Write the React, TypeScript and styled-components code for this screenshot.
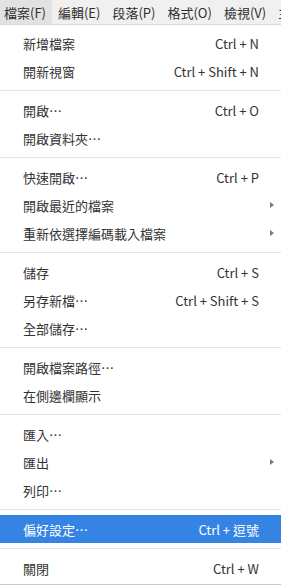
import React from "react";
import styled, { createGlobalStyle } from "styled-components";

const Global = createGlobalStyle`
  html, body { margin: 0; padding: 0; background: #ffffff; overflow: hidden; }
  body { font-family: "Noto Sans CJK TC", "Noto Sans", sans-serif; -webkit-font-smoothing: antialiased; }
`;

const Page = styled.div`
  width: 281px;
  height: 585px;
  overflow: hidden;
  display: flex;
  flex-direction: column;
  background: #ffffff;
`;

const MenuBar = styled.div`
  display: flex;
  height: 24px;
  background: #f0f0f0;
  border-bottom: 1px solid #d9d9d9;
  margin-left: -2px;
  white-space: nowrap;
  flex-shrink: 0;
`;

const BarItem = styled.div<{ $active?: boolean }>`
  display: flex;
  align-items: center;
  padding: 0 6px;
  font-size: 13px;
  color: #2e2e2e;
  background: ${(p) => (p.$active ? "#e2e2e2" : "transparent")};
`;

const Dropdown = styled.div`
  display: flex;
  flex-direction: column;
  padding: 4px 0 2px;
  border-bottom: 1px solid #c9c9c9;
  background: #ffffff;
  flex-shrink: 0;
`;

const Row = styled.div<{ $hl?: boolean }>`
  display: flex;
  align-items: center;
  height: 28px;
  padding: 0 22px 0 23px;
  font-size: 13px;
  color: ${(p) => (p.$hl ? "#ffffff" : "#333333")};
  background: ${(p) => (p.$hl ? "#3584e4" : "transparent")};
  position: relative;
`;

const Label = styled.span`
  flex: 1;
  white-space: nowrap;
`;

const Shortcut = styled.span`
  white-space: nowrap;
`;

const Arrow = styled.span`
  position: absolute;
  right: 7px;
  top: 11px;
  width: 0;
  height: 0;
  border-top: 3px solid transparent;
  border-bottom: 3px solid transparent;
  border-left: 4px solid #7a7a7a;
`;

const Sep = styled.div`
  height: 1px;
  margin: 5px 0;
  background: #e3e3e3;
`;

type Item = { label: string; shortcut?: string; sub?: boolean; hl?: boolean } | "sep";

const items: Item[] = [
  { label: "新增檔案", shortcut: "Ctrl + N" },
  { label: "開新視窗", shortcut: "Ctrl + Shift + N" },
  "sep",
  { label: "開啟…", shortcut: "Ctrl + O" },
  { label: "開啟資料夾…" },
  "sep",
  { label: "快速開啟…", shortcut: "Ctrl + P" },
  { label: "開啟最近的檔案", sub: true },
  { label: "重新依選擇編碼載入檔案", sub: true },
  "sep",
  { label: "儲存", shortcut: "Ctrl + S" },
  { label: "另存新檔…", shortcut: "Ctrl + Shift + S" },
  { label: "全部儲存…" },
  "sep",
  { label: "開啟檔案路徑…" },
  { label: "在側邊欄顯示" },
  "sep",
  { label: "匯入…" },
  { label: "匯出", sub: true },
  { label: "列印…" },
  "sep",
  { label: "偏好設定…", shortcut: "Ctrl + 逗號", hl: true },
  "sep",
  { label: "關閉", shortcut: "Ctrl + W" },
];

const bar = ["檔案(F)", "編輯(E)", "段落(P)", "格式(O)", "檢視(V)", "主題(T)"];

export default function App() {
  return (
    <Page>
      <Global />
      <MenuBar>
        {bar.map((b, i) => (
          <BarItem key={b} $active={i === 0}>
            {b}
          </BarItem>
        ))}
      </MenuBar>
      <Dropdown>
        {items.map((it, i) =>
          it === "sep" ? (
            <Sep key={i} />
          ) : (
            <Row key={i} $hl={it.hl}>
              <Label>{it.label}</Label>
              {it.shortcut && <Shortcut>{it.shortcut}</Shortcut>}
              {it.sub && <Arrow />}
            </Row>
          )
        )}
      </Dropdown>
    </Page>
  );
}
